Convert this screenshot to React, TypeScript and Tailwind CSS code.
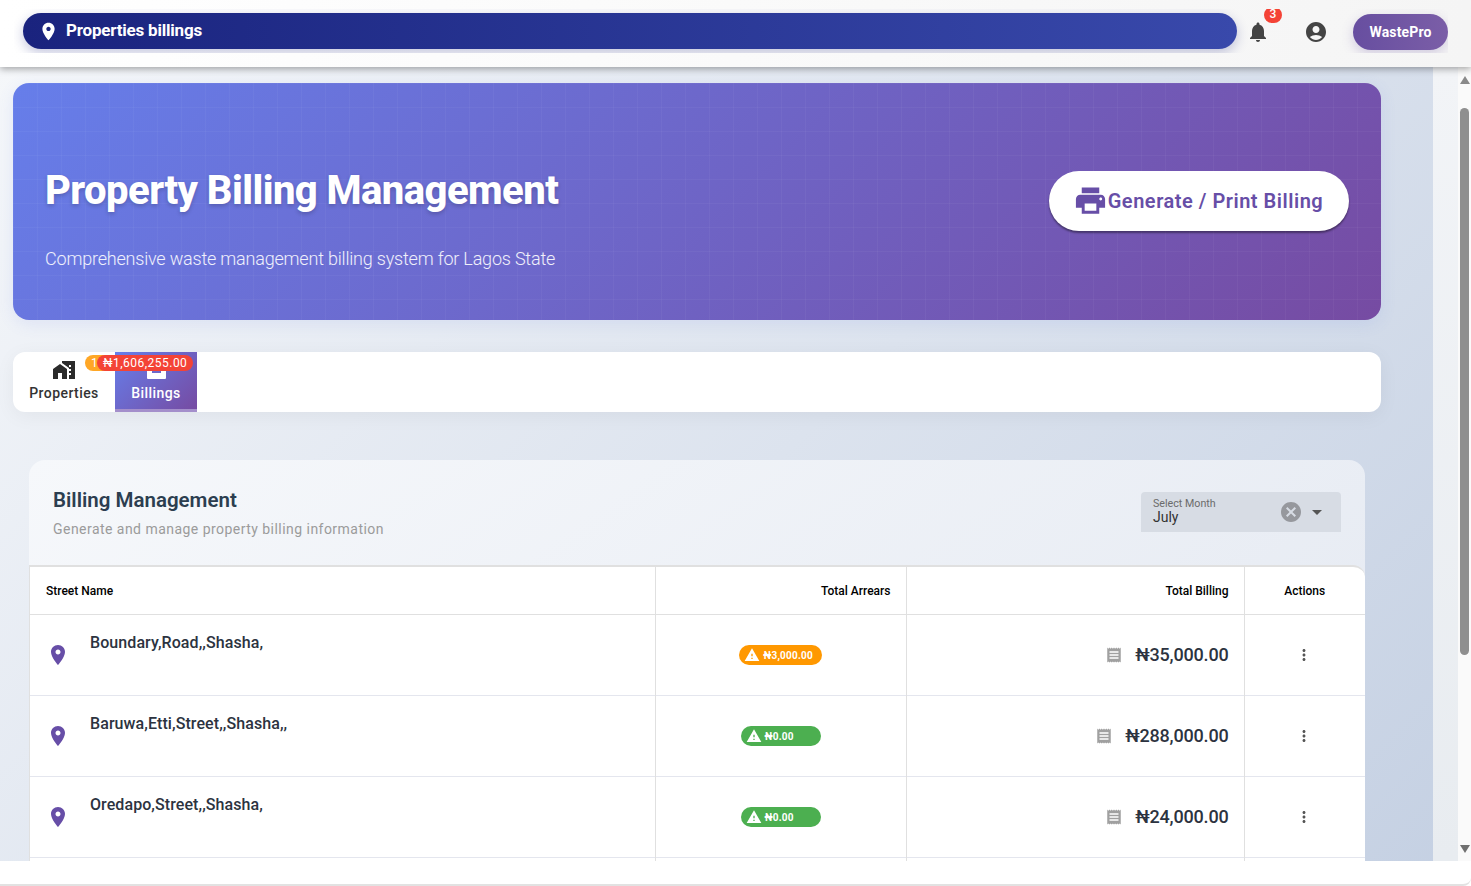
const PIN = 'M12 2C8.13 2 5 5.13 5 9c0 5.25 7 13 7 13s7-7.75 7-13c0-3.87-3.13-7-7-7zm0 9.5c-1.38 0-2.5-1.12-2.5-2.5s1.12-2.5 2.5-2.5 2.5 1.12 2.5 2.5-1.12 2.5-2.5 2.5z'
const BELL = 'M12 22c1.1 0 2-.9 2-2h-4c0 1.1.89 2 2 2zm6-6v-5c0-3.07-1.64-5.64-4.5-6.32V4c0-.83-.67-1.5-1.5-1.5s-1.5.67-1.5 1.5v.68C7.63 5.36 6 7.92 6 11v5l-2 2v1h16v-1l-2-2z'
const ACCOUNT = 'M12 2C6.48 2 2 6.48 2 12s4.48 10 10 10 10-4.48 10-10S17.52 2 12 2zm0 4c1.93 0 3.5 1.57 3.5 3.5S13.93 13 12 13s-3.5-1.57-3.5-3.5S10.07 6 12 6zm0 14c-2.03 0-4.43-.82-6.14-2.88C7.55 15.8 9.68 15 12 15s4.45.8 6.14 2.12C16.43 19.18 14.03 20 12 20z'
const PRINT = 'M19 8H5c-1.66 0-3 1.34-3 3v6h4v4h12v-4h4v-6c0-1.66-1.34-3-3-3zm-3 11H8v-5h8v5zm3-7c-.55 0-1-.45-1-1s.45-1 1-1 1 .45 1 1-.45 1-1 1zm-1-9H6v4h12V3z'
const HOME_WORK = 'M1 11v10h5v-6h4v6h5V11L8 6zM10 3v1.97l7 5V11h2v2h-2v2h2v2h-2v4h6V3H10zm9 6h-2V7h2v2z'
const CANCEL = 'M12 2C6.47 2 2 6.47 2 12s4.47 10 10 10 10-4.47 10-10S17.53 2 12 2zm5 13.59L15.59 17 12 13.41 8.41 17 7 15.59 10.59 12 7 8.41 8.41 7 12 10.59 15.59 7 17 8.41 13.41 12 17 15.59z'
const MORE = 'M12 8c1.1 0 2-.9 2-2s-.9-2-2-2-2 .9-2 2 .9 2 2 2zm0 2c-1.1 0-2 .9-2 2s.9 2 2 2 2-.9 2-2-.9-2-2-2zm0 6c-1.1 0-2 .9-2 2s.9 2 2 2 2-.9 2-2-.9-2-2-2z'
const WARNING = 'M1 21h22L12 2 1 21zm12-3h-2v-2h2v2zm0-4h-2v-4h2v4z'
const RECEIPT = 'M18 17H6v-2h12v2zm0-4H6v-2h12v2zm0-4H6V7h12v2zM3 22l1.5-1.5L6 22l1.5-1.5L9 22l1.5-1.5L12 22l1.5-1.5L15 22l1.5-1.5L18 22l1.5-1.5L21 22V2l-1.5 1.5L18 2l-1.5 1.5L15 2l-1.5 1.5L12 2l-1.5 1.5L9 2 7.5 3.5 6 2 4.5 3.5 3 2v20z'
// only the lower part of this one shows, the badges sit over the rest
const BILLINGS = 'M3 11a1 1 0 0 1 1-1h4v5h9v-5h4a1 1 0 0 1 1 1v9a1 1 0 0 1-1 1H4a1 1 0 0 1-1-1z'

function Icon({ d, className }: { d: string; className?: string }) {
  return (
    <svg viewBox="0 0 24 24" fill="currentColor" className={className}>
      <path d={d} />
    </svg>
  )
}

const rows = [
  { street: 'Boundary,Road,,Shasha,', arrears: '₦3,000.00', late: true, total: '₦35,000.00' },
  { street: 'Baruwa,Etti,Street,,Shasha,,', arrears: '₦0.00', late: false, total: '₦288,000.00' },
  { street: 'Oredapo,Street,,Shasha,', arrears: '₦0.00', late: false, total: '₦24,000.00' },
]

export default function App() {
  return (
    <div className="h-[886px] w-[1471px] flex flex-col overflow-hidden bg-white font-['Roboto',sans-serif]">
      {/* Top bar */}
      <header className="relative z-10 h-[67px] shrink-0 pt-[9px] bg-gradient-to-r from-white to-[#f5f5f5] shadow-[0_2px_7px_rgba(0,0,0,0.35)]">
        <div className="h-[44px] ml-[14px] mr-[23px] pt-1 pl-[9px] flex items-start overflow-hidden">
          <div className="h-9 w-[1214px] flex items-center pl-[15px] rounded-[18px] bg-gradient-to-r from-[#1a237e] to-[#3949ab] shadow-[0_4px_12px_rgba(26,35,126,0.25)] text-white">
            <Icon d={PIN} className="w-[21px] h-[21px]" />
            <span className="ml-[7px] text-[17px] font-bold tracking-[-0.012em]">Properties billings</span>
          </div>
          <div className="relative ml-[9px] mt-[7px] w-6 h-6 text-[#444]">
            <Icon d={BELL} className="w-6 h-6" />
            <span className="absolute -top-[13px] left-[18px] w-[18px] h-[16px] rounded-full bg-[#f44336] text-white text-[12px] leading-[14px] font-medium text-center">3</span>
          </div>
          <Icon d={ACCOUNT} className="ml-[34px] mt-[7px] w-6 h-6 text-[#444]" />
          <div className="ml-[25px] mt-[1px] pb-[1px] w-[95px] h-9 rounded-[18px] bg-gradient-to-r from-[#674ea0] to-[#7b5ea7] text-white text-sm font-bold tracking-[0.01em] flex items-center justify-center shadow-[0_4px_12px_rgba(103,78,160,0.25)]">
            WastePro
          </div>
        </div>
      </header>

      <div className="h-[794px] shrink-0 flex">
        {/* Page content */}
        <main className="w-[1433px] h-full overflow-hidden pt-4 pl-[13px] bg-[linear-gradient(135deg,#f5f7fa_0%,#c3cfe2_105%)]">
          <section className="w-[1368px] h-[237px] rounded-2xl pl-8 pr-8 flex items-center justify-between text-white bg-[linear-gradient(rgba(255,255,255,0.035)_1px,transparent_1px),linear-gradient(90deg,rgba(255,255,255,0.035)_1px,transparent_1px),linear-gradient(135deg,#667eea_0%,#764ba2_100%)] bg-[length:24px_24px,24px_24px,100%_100%] shadow-[0_4px_16px_rgba(102,126,234,0.12)]">
            <div className="pt-[36px]">
              <h1 className="text-[40px] leading-[48px] font-extrabold tracking-[-0.014em] [text-shadow:0_2px_4px_rgba(0,0,0,0.2)]">Property Billing Management</h1>
              <p className="mt-[30px] text-lg leading-7 font-light tracking-[-0.011em] text-white/90">Comprehensive waste management billing system for Lagos State</p>
            </div>
            <button className="mb-[2px] pl-[2px] w-[300px] h-[60px] rounded-[30px] bg-white text-[#674ea7] flex items-center justify-center text-xl font-semibold tracking-[0.026em] shadow-[0_2px_2px_rgba(0,0,0,0.4)]">
              <Icon d={PRINT} className="w-[35px] h-[35px] -ml-1" />
              Generate / Print Billing
            </button>
          </section>

          {/* Tabs */}
          <nav className="relative mt-8 w-[1368px] h-[60px] rounded-xl bg-white flex overflow-hidden shadow-[0_4px_20px_rgba(0,0,0,0.05)]">
            <div className="w-[102px] flex flex-col items-center pt-[6px] text-[#333]">
              <Icon d={HOME_WORK} className="w-6 h-6 text-[#2b2b2b]" />
              <span className="mt-[1px] text-sm font-medium tracking-[0.03em]">Properties</span>
            </div>
            <div className="w-[82px] flex flex-col items-center pt-[6px] text-white border-b-[3px] border-[#a48fcb] bg-[linear-gradient(135deg,#667eea_0%,#764ba2_100%)]">
              <Icon d={BILLINGS} className="w-6 h-6" />
              <span className="mt-[1px] text-sm font-medium tracking-[0.03em]">Billings</span>
            </div>
            <span className="absolute left-[72px] top-[3px] h-4 w-8 pl-[6px] rounded-full bg-[#ffa726] text-white text-xs leading-4">1</span>
            <span className="absolute left-[84px] top-[3px] h-4 px-[6px] rounded-full bg-[#f44336] text-white text-xs leading-4 tracking-[0.04em]">₦1,606,255.00</span>
          </nav>

          {/* Billing card */}
          <section className="mt-12 ml-4 w-[1336px] rounded-t-2xl bg-[linear-gradient(145deg,#f6f8fb,#e3e8f1)]">
            <div className="h-[105px] px-6 pt-[26px] flex items-start justify-between">
              <div>
                <h2 className="text-[20.5px] leading-7 font-semibold text-[#2c3e50]">Billing Management</h2>
                <p className="mt-[5px] text-sm leading-5 tracking-[0.033em] text-[#9b9b9b]">Generate and manage property billing information</p>
              </div>
              <div className="mt-[6px] w-[200px] h-10 rounded-t bg-[#d7dce4] pl-3 pr-3 flex items-center">
                <div className="flex-1 pb-[1px]">
                  <div className="text-[10.7px] leading-[11px] text-[#6b6b6b]">Select Month</div>
                  <div className="text-sm leading-[16px] text-[#333]">July</div>
                </div>
                <Icon d={CANCEL} className="w-6 h-6 text-[#96989d]" />
                <svg viewBox="0 0 24 24" fill="currentColor" className="ml-[2px] w-6 h-6 text-[#555]">
                  <path d="M7 10l5 5 5-5z" />
                </svg>
              </div>
            </div>
            <div className="border-t-2 border-[#e0e0e0] border-l border-[#e0e0e0] rounded-tr-xl bg-white overflow-hidden">
              <table className="w-full table-fixed border-collapse">
                <colgroup>
                  <col className="w-[625px]" />
                  <col className="w-[251px]" />
                  <col className="w-[338px]" />
                  <col />
                </colgroup>
                <thead>
                  <tr className="h-[47px] text-xs font-medium text-black border-b border-[#e0e0e0]">
                    <th className="pl-4 pr-4 pt-[2px] text-left font-medium">Street Name</th>
                    <th className="pl-4 pr-[15px] pt-[2px] text-right font-medium border-l border-[#e0e0e0]">Total Arrears</th>
                    <th className="pl-4 pr-[15px] pt-[2px] text-right font-medium border-l border-[#e0e0e0]">Total Billing</th>
                    <th className="px-4 pt-[2px] text-center font-medium border-l border-[#e0e0e0]">Actions</th>
                  </tr>
                </thead>
                <tbody>
                  {rows.map((r) => (
                    <tr key={r.street} className="h-[81px] border-b border-[#e4e6ee]">
                      <td className="pl-4">
                        <div className="flex items-center">
                          <Icon d={PIN} className="w-6 h-6 text-[#674ea7]" />
                          <span className="ml-5 mb-6 text-base leading-6 font-medium tracking-[0.005em] text-[#2c3340]">{r.street}</span>
                        </div>
                      </td>
                      <td className="border-l border-[#e0e0e0]">
                        <div className="flex justify-center">
                          <span className={r.late
                            ? 'h-5 min-w-20 pl-[5px] pr-[9px] rounded-full bg-[#ff9800] text-white flex items-center text-[10px] font-bold tracking-[0.02em]'
                            : 'h-5 min-w-20 pl-[5px] pr-[9px] rounded-full bg-[#4caf50] text-white flex items-center text-[10px] font-bold tracking-[0.02em]'}>
                            <Icon d={WARNING} className="w-4 h-4 mr-[3px]" />
                            <span className="mt-[1px]">{r.arrears}</span>
                          </span>
                        </div>
                      </td>
                      <td className="pr-[15px] border-l border-[#e0e0e0]">
                        <div className="flex items-center justify-end">
                          <Icon d={RECEIPT} className="w-[18px] h-[18px] mr-3 text-[#a0a0a0]" />
                          <span className="text-lg leading-6 font-medium tracking-[-0.01em] text-[#2c3340]">{r.total}</span>
                        </div>
                      </td>
                      <td className="pr-[2px] border-l border-[#e0e0e0]">
                        <Icon d={MORE} className="mx-auto w-[18px] h-[18px] text-[#555]" />
                      </td>
                    </tr>
                  ))}
                  <tr className="h-[81px]">
                    <td />
                    <td className="border-l border-[#e0e0e0]" />
                    <td className="border-l border-[#e0e0e0]" />
                    <td className="border-l border-[#e0e0e0]" />
                  </tr>
                </tbody>
              </table>
            </div>
          </section>
        </main>

        <div className="w-[25px] h-full bg-gradient-to-b from-[#f2f4f7] to-[#e8ecf0]" />

        {/* Scrollbar */}
        <div className="w-[13px] h-full bg-[#fafafa] flex flex-col items-center">
          <svg viewBox="0 0 10 8" fill="#8a8a8a" className="mt-[9px] w-[10px] h-2 shrink-0"><path d="M5 0l5 8H0z" /></svg>
          <div className="mt-[24px] w-[9px] h-[547px] shrink-0 rounded-full bg-[#8f8f8f]" />
          <svg viewBox="0 0 10 8" fill="#707070" className="mt-[190px] w-[10px] h-2 shrink-0"><path d="M0 0h10L5 8z" /></svg>
        </div>
      </div>

      {/* Bottom strip */}
      <div className="h-[25px] shrink-0 bg-white border-b-2 border-[#e2e2e2] rounded-br-lg" />
    </div>
  )
}
